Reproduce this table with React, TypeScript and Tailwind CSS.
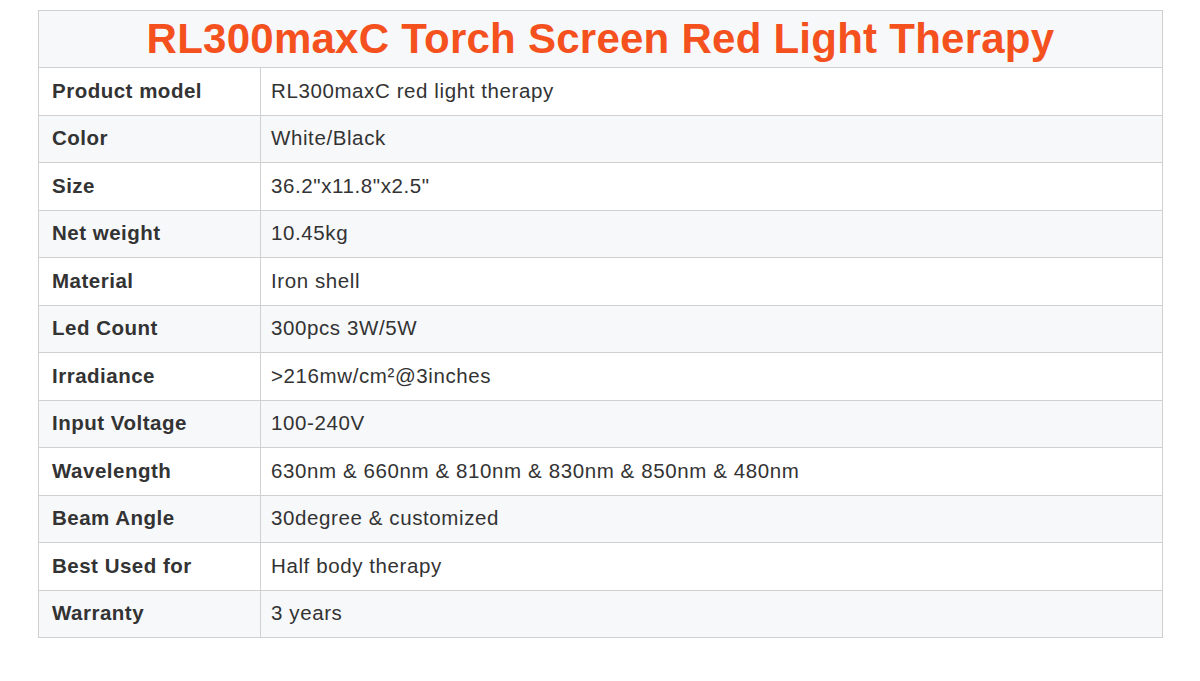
const specs: [string, string][] = [
  ['Product model', 'RL300maxC red light therapy'],
  ['Color', 'White/Black'],
  ['Size', '36.2"x11.8"x2.5"'],
  ['Net weight', '10.45kg'],
  ['Material', 'Iron shell'],
  ['Led Count', '300pcs 3W/5W'],
  ['Irradiance', '>216mw/cm²@3inches'],
  ['Input Voltage', '100-240V'],
  ['Wavelength', '630nm & 660nm & 810nm & 830nm & 850nm & 480nm'],
  ['Beam Angle', '30degree & customized'],
  ['Best Used for', 'Half body therapy'],
  ['Warranty', '3 years'],
];

export default function App() {
  return (
    <div className="w-[1200px] h-[681px] bg-white pt-[10px] pl-[38px]" style={{ fontFamily: '"Liberation Sans", Arial, sans-serif' }}>
      <table className="w-[1125px] border-collapse border border-[#d0d0d0] text-[#333333]">
        <tbody>
          <tr className="bg-[#f7f8fa]">
            <td colSpan={2} className="h-[57px] border border-[#d0d0d0] text-center text-[42px] tracking-[0.25px] font-bold leading-none text-[#f4511e]">
              RL300maxC Torch Screen Red Light Therapy
            </td>
          </tr>
          {specs.map(([label, value], i) => (
            <tr key={label} className={i % 2 === 0 ? 'bg-white' : 'bg-[#f7f8fa]'}>
              <td className="w-[222px] h-[47.5px] border border-[#d0d0d0] px-[13px] text-[20.5px] tracking-[0.5px] font-bold">
                {label}
              </td>
              <td className="h-[47.5px] border border-[#d0d0d0] px-[10px] text-[20.5px] tracking-[0.6px]">
                {value}
              </td>
            </tr>
          ))}
        </tbody>
      </table>
    </div>
  );
}
